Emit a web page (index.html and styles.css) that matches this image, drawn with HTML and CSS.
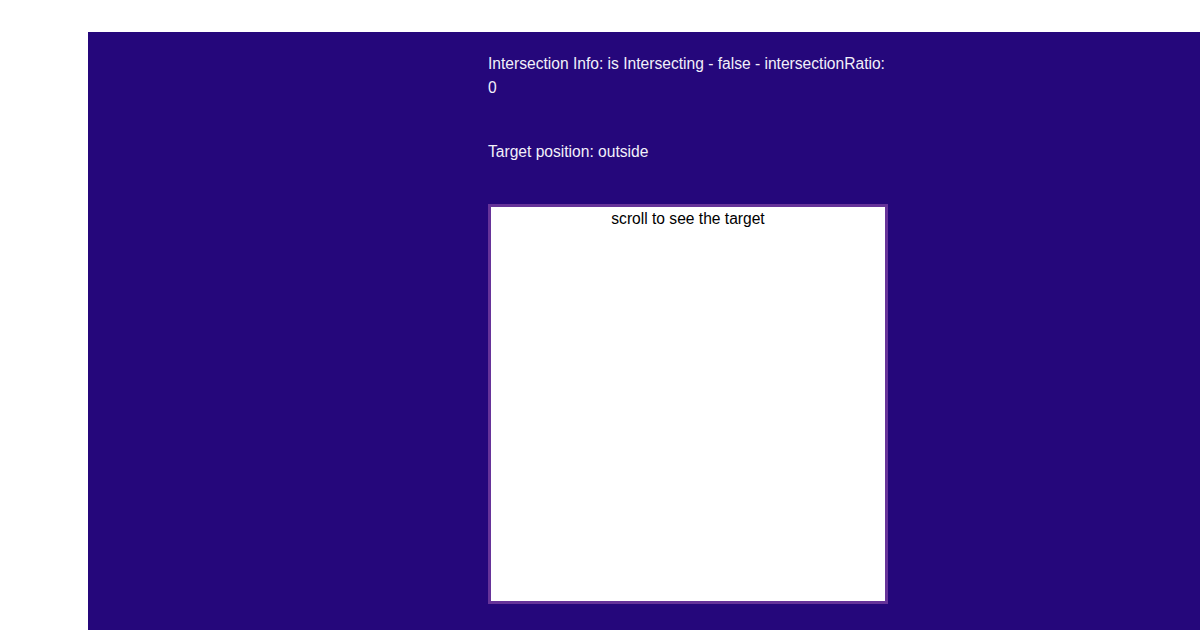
FILE: index.html
```html
<!DOCTYPE html>
<html lang="en">
<head>
<meta charset="utf-8">
<title>Intersection Observer</title>
<link rel="stylesheet" href="styles.css">
</head>
<body>
  <main class="stage">
    <div class="column">
      <p class="info">Intersection Info: is Intersecting - false - intersectionRatio: 0</p>
      <p class="info position">Target position: outside</p>
      <div class="viewport">
        <div class="hint">scroll to see the target</div>
      </div>
    </div>
  </main>
</body>
</html>
```

FILE: styles.css
```css
html, body {
  margin: 0;
  padding: 0;
  background: #ffffff;
  height: 100%;
  overflow: hidden;
}

body {
  font-family: "Liberation Sans", Arial, sans-serif;
  font-size: 15.6px;
  line-height: 24px;
}

.stage {
  margin: 32px 0 0 88px;
  background: #25077b;
  height: 598px;
  padding: 20px 0 0 400px;
  box-sizing: border-box;
}

.column {
  width: 400px;
  display: flex;
  flex-direction: column;
}

.info {
  margin: 0;
  color: #f2f0fa;
}

.position {
  margin-top: 40px;
}

.viewport {
  margin-top: 40px;
  box-sizing: border-box;
  width: 400px;
  height: 400px;
  border: 3px solid #663399;
  background: #ffffff;
}

.hint {
  text-align: center;
  color: #000000;
}
```
